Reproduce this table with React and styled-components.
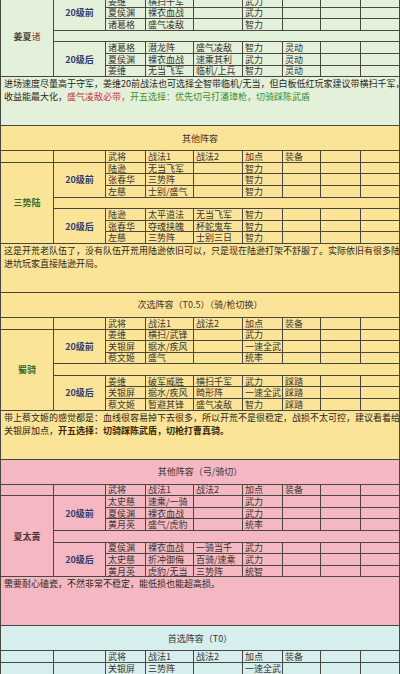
import React from "react";
import styled, { createGlobalStyle } from "styled-components";

const LINE = "#4a4640";

const Global = createGlobalStyle`
  html, body { margin: 0; padding: 0; background: #fff; }
  body { font-family: "Noto Sans CJK SC", "Noto Sans", sans-serif; color: #333; }
`;

const Page = styled.div`
  width: 400px;
  overflow: hidden;
`;

const Section = styled.section`
  --bg: ${(p) => p.$bg};
  background: var(--bg);
  border-left: 1px solid ${LINE};
  border-right: 1px solid ${LINE};
`;

const Title = styled.div`
  height: 24px;
  border-top: 1px solid ${LINE};
  display: flex;
  align-items: center;
  justify-content: center;
  font-size: 9px;
  color: #3a3530;
`;

const Grid = styled.div`
  display: grid;
  grid-template-columns: 52px 51px 39px 47px 48px 39px 37px 39px 38px;
  grid-auto-rows: 10.6px;
  gap: 1px;
  padding: 1px 0;
  background: ${LINE};
  margin-top: ${(p) => p.$shift || 0}px;
`;

const Cell = styled.div`
  background: var(--bg);
  display: flex;
  align-items: center;
  padding: 0 2px;
  font-size: 9px;
  line-height: 1;
  color: #3a3530;
  white-space: nowrap;
  overflow: hidden;
`;

const Label = styled(Cell)`
  grid-row: span 7;
  justify-content: center;
  font-weight: 700;
  color: ${(p) => p.$color};
`;

const Group = styled(Cell)`
  grid-row: span 3;
  justify-content: center;
  font-weight: 700;
  color: #2e3d70;
`;

const Spacer = styled(Cell)`
  grid-column: span 8;
`;

const Note = styled.div`
  height: 48px;
  padding: 0 3px;
  box-sizing: border-box;
  font-size: 9px;
  line-height: 13px;
  color: #2a2520;
`;

const NoteLine = styled.div`
  white-space: nowrap;
`;

const Mark = styled.span`
  color: ${(p) => p.$color};
  font-weight: ${(p) => (p.$bold ? 700 : 400)};
`;

const HEAD = ["", "", "武将", "战法1", "战法2", "加点", "装备", "", ""];

function Rows({ rows }) {
  return rows.map((r, i) =>
    [0, 1, 2, 3, 4, 5, 6].map((j) => <Cell key={i + "-" + j}>{r[j] || ""}</Cell>)
  );
}

function Lineup({ label, labelColor, before, after, header = true, shift }) {
  return (
    <Grid $shift={shift}>
      {header && HEAD.map((h, i) => <Cell key={"h" + i}>{h}</Cell>)}
      <Label $color={labelColor}>{label}</Label>
      <Group>20级前</Group>
      <Rows rows={before} />
      <Spacer />
      <Group>20级后</Group>
      <Rows rows={after} />
    </Grid>
  );
}

export default function App() {
  return (
    <Page>
      <Global />
      <Section $bg="#e3f0da">
        <Lineup
          header={false}
          shift={-5}
          label={
            <span>
              姜夏<Mark $color="#8a3535">诸</Mark>
            </span>
          }
          labelColor="#4a4535"
          before={[
            ["姜维", "横扫千军", "", "武力"],
            ["夏侯渊", "裸衣血战", "", "武力"],
            ["诸葛格", "盛气凌敌", "", "智力"],
          ]}
          after={[
            ["诸葛格", "潜龙阵", "盛气凌敌", "智力", "灵动"],
            ["夏侯渊", "裸衣血战", "速乘其利", "武力", "灵动"],
            ["姜维", "无当飞军", "临机/上兵", "智力", "灵动"],
          ]}
        />
        <Note>
          <NoteLine>进场速度尽量高于守军，姜维20前战法也可选择全智带临机/无当，但白板低红玩家建议带横扫千军，</NoteLine>
          <NoteLine>
            收益能最大化，<Mark $color="#c8383a">盛气凌敌必带，</Mark>
            <Mark $color="#3e8f2c">开五选择：优先切弓打潘璋枪，切骑踩陈武盾</Mark>
          </NoteLine>
        </Note>
      </Section>

      <Section $bg="#fbe497">
        <Title>其他阵容</Title>
        <Lineup
          label="三势陆"
          labelColor="#3d6e2c"
          before={[
            ["陆逊", "无当飞军", "", "智力"],
            ["张春华", "三势阵", "", "智力"],
            ["左慈", "士别/盛气", "", "智力"],
          ]}
          after={[
            ["陆逊", "太平道法", "无当飞军", "智力"],
            ["张春华", "夺魂挟魄", "杯蛇鬼车", "智力"],
            ["左慈", "三势阵", "士别三日", "智力"],
          ]}
        />
        <Note>
          <NoteLine>这是开荒老队伍了，没有队伍开荒用陆逊依旧可以，只是现在陆逊打架不舒服了。实际依旧有很多陆</NoteLine>
          <NoteLine>进坑玩家直接陆逊开局。</NoteLine>
        </Note>
      </Section>

      <Section $bg="#fbe497">
        <Title>次选阵容（T0.5）（骑/枪切换）</Title>
        <Lineup
          label="蜀骑"
          labelColor="#3d6e2c"
          before={[
            ["姜维", "横扫/武锋", "", "武力"],
            ["关银屏", "据水/疾风", "", "一速全武"],
            ["蔡文姬", "盛气", "", "统率"],
          ]}
          after={[
            ["姜维", "破军威胜", "横扫千军", "武力", "踩踏"],
            ["关银屏", "据水/疾风", "畸形阵", "一速全武", "踩踏"],
            ["蔡文姬", "暂避其锋", "盛气凌敌", "智力", "踩踏"],
          ]}
        />
        <Note>
          <NoteLine>带上蔡文姬的感觉都是：血线很容易掉下去很多，所以开荒不是很稳定，战损不太可控，建议看着给</NoteLine>
          <NoteLine>
            关银屏加点，<Mark $color="#3a2a05" $bold>开五选择：切骑踩陈武盾，切枪打曹真骑。</Mark>
          </NoteLine>
        </Note>
      </Section>

      <Section $bg="#f5b8c3">
        <Title>其他阵容（弓/骑切）</Title>
        <Lineup
          label="夏太黄"
          labelColor="#4d3535"
          before={[
            ["太史慈", "速乘/一骑", "", "武力"],
            ["夏侯渊", "裸衣血战", "", "武力"],
            ["黄月英", "盛气/虎豹", "", "统率"],
          ]}
          after={[
            ["夏侯渊", "裸衣血战", "一骑当千", "武力"],
            ["太史慈", "折冲御侮", "百骑/速乘", "武力"],
            ["黄月英", "虎豹/无当", "三势阵", "统智"],
          ]}
        />
        <Note>
          <NoteLine>需要耐心磕瓷，不然非常不稳定，能低损也能超高损。</NoteLine>
        </Note>
      </Section>

      <Section $bg="#d6efee">
        <Title>首选阵容（T0）</Title>
        <Lineup
          label="蜀骑"
          labelColor="#3d6e2c"
          before={[
            ["关银屏", "三势阵", "", "一速全武"],
            ["姜维", "无当飞军", "", "武力"],
            ["蔡文姬", "盛气凌敌", "", "统率"],
          ]}
          after={[
            ["关银屏", "据水/疾风", "", "一速全武"],
            ["姜维", "破军威胜", "", "武力"],
            ["蔡文姬", "暂避其锋", "", "智力"],
          ]}
        />
      </Section>
    </Page>
  );
}
